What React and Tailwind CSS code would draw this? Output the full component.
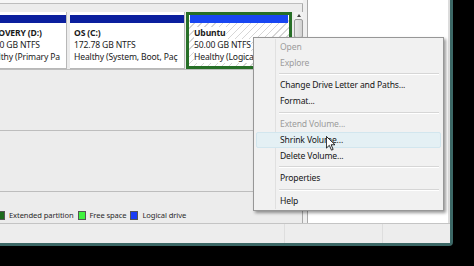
import React from 'react';

const MenuItem = ({ label, disabled, active }) => (
    <div
        className={`h-4 flex items-center pl-[23px] mx-[2px] rounded-[2px] border ${
            active ? 'bg-[#e4f0f4] border-[#d2e6ee]' : 'border-transparent'
        } ${disabled ? 'text-[#9c9c9c]' : 'text-[#151515]'}`}
    >
        {label}
    </div>
);

const MenuSep = ({ h }) => (
    <div className={`${h} flex flex-col justify-center pl-[25px] pr-[4px]`}>
        <div className="h-px bg-[#d6d6d6]" />
        <div className="h-px bg-white" />
    </div>
);

const Partition = ({ name, size, status, className = '', bar = 'bg-[#0b1f9e]' }) => (
    <div className={`bg-white flex flex-col shrink-0 overflow-hidden border-r border-b border-[#b8b8b8] pt-[3px] ${className}`}>
        <div className={`h-[8px] ${bar}`} />
        <div className="pl-[4px] pt-[4px] leading-[12px] whitespace-nowrap overflow-hidden text-[#1a1a1a]">
            <div className="font-bold">{name}</div>
            <div>{size}</div>
            <div>{status}</div>
        </div>
    </div>
);

const LegendItem = ({ color, label }) => (
    <div className="flex items-center gap-[4px]">
        <div className={`w-[8px] h-[9px] border border-[#555] ${color}`} />
        <span>{label}</span>
    </div>
);

export default function App() {
    return (
        <div className="w-[474px] h-[266px] bg-black relative overflow-hidden font-['Noto_Sans',sans-serif] text-[8.6px] tracking-[-0.15px]">
            <div className="w-[453px] h-[246px] bg-[#efefef] border-r-[3px] border-b-[3px] border-[#3c6866] rounded-br-[4px] flex flex-col overflow-hidden">
                <div className="flex h-[224px] border-b border-[#c4c4c4]">
                    {/* graphical view */}
                    <div className="w-[303px] flex flex-col">
                        <div className="h-[4px] bg-[#f6f6f6] border-b border-[#bdbdbd]" />
                        <div className="flex-1 flex flex-col border-r border-[#a9a9a9] bg-[#ececec]">
                            <div className="h-[66px] flex pt-[8px] border-b border-[#bdbdbd]">
                                <Partition
                                    className="w-[88px] -ml-[21px] mr-[3px]"
                                    name="RECOVERY (D:)"
                                    size="14.60 GB NTFS"
                                    status="Healthy (Primary Pa"
                                />
                                <Partition
                                    className="w-[115px] mr-px"
                                    name="OS (C:)"
                                    size="172.78 GB NTFS"
                                    status="Healthy (System, Boot, Paç"
                                />
                                <div className="w-[106px] shrink-0 border-[3px] border-[#276f27] flex flex-col bg-[repeating-linear-gradient(135deg,#ffffff_0px,#ffffff_4px,#d6d6d6_4px,#d6d6d6_5px)]">
                                    <div className="h-[8px] mx-px bg-[#1846f2]" />
                                    <div className="pl-[5px] pt-[4px] leading-[12px] whitespace-nowrap overflow-hidden text-[#1a1a1a]">
                                        <div><span className="font-bold bg-white">Ubuntu</span></div>
                                        <div><span className="bg-white">50.00 GB NTFS</span></div>
                                        <div><span className="bg-white">Healthy (Logica</span></div>
                                    </div>
                                </div>
                                {/* scrollbar */}
                                <div className="w-[10px] ml-[2px] flex flex-col items-center bg-[#f2f2f2]">
                                    <svg width="6" height="5" viewBox="0 0 6 5" className="mt-[1px]">
                                        <path d="M3 1 L5 4 L1 4 Z" fill="#444" />
                                    </svg>
                                    <div className="w-[9px] h-[19px] mt-[1px] rounded-[2px] border border-[#9b9b9b] bg-[linear-gradient(90deg,#e8e8e8,#d2d2d2)]" />
                                </div>
                            </div>
                            <div className="h-[61px] border-b border-[#bdbdbd]" />
                            <div className="h-[61px] border-b border-[#bdbdbd]" />
                            <div className="flex-1 flex items-end pb-[2px] gap-[4px] -ml-[3px] text-[7.6px] tracking-[-0.1px] text-[#2a2a2a]">
                                <LegendItem color="bg-[#1c6a1c]" label="Extended partition" />
                                <LegendItem color="bg-[#3ff23f]" label="Free space" />
                                <LegendItem color="bg-[#1a3cf5]" label="Logical drive" />
                            </div>
                        </div>
                    </div>
                    <div className="w-[4px]" />
                    {/* right pane */}
                    <div className="flex-1 bg-white border-l border-[#a9a9a9]" />
                    <div className="w-[2px] bg-[#dcdcdc]" />
                </div>
                {/* status bar */}
                <div className="flex-1 flex bg-[#ededed]">
                    <div className="w-[285px] border-r border-[#dedede]" />
                    <div className="w-[98px] border-r border-[#dedede]" />
                </div>
            </div>

            {/* context menu */}
            <div className="absolute left-[253px] top-[37px] w-[191px] h-[174px] bg-[#f1f1f1] border border-[#979797] shadow-[2px_2px_3px_rgba(0,0,0,0.4)] py-px">
                <div className="absolute left-[21px] top-[1px] bottom-[1px] w-px bg-[#e0e0e0]" />
                <div className="relative">
                    <MenuItem label="Open" disabled />
                    <MenuItem label="Explore" disabled />
                    <MenuSep h="h-[6px]" />
                    <MenuItem label="Change Drive Letter and Paths..." />
                    <MenuItem label="Format..." />
                    <MenuSep h="h-[7px]" />
                    <MenuItem label="Extend Volume..." disabled />
                    <MenuItem label="Shrink Volume..." active />
                    <MenuItem label="Delete Volume..." />
                    <MenuSep h="h-[6px]" />
                    <MenuItem label="Properties" />
                    <MenuSep h="h-[7px]" />
                    <MenuItem label="Help" />
                </div>
            </div>

            {/* mouse cursor */}
            <svg className="absolute left-[326px] top-[136px]" width="10" height="15" viewBox="0 0 12 18">
                <path d="M0.5 0.5 L0.5 14.5 L4 11.2 L6.6 17 L8.6 16.1 L6.1 10.5 L10.8 10.5 Z" fill="#fff" stroke="#000" strokeWidth="1" strokeLinejoin="round" />
            </svg>
        </div>
    );
}
